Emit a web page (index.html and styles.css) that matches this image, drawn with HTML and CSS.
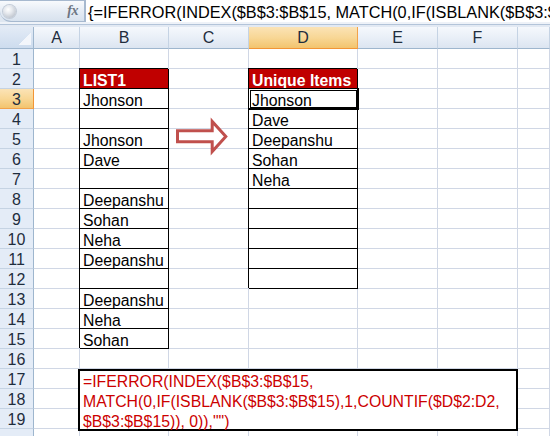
FILE: index.html
```html
<!DOCTYPE html>
<html>
<head>
<meta charset="utf-8">
<link rel="stylesheet" href="styles.css">
</head>
<body>
<div class="app">
  <div class="fbar">
    <div class="namebox"><span class="orb"></span><span class="fx">fx</span></div>
    <div class="finput">{=IFERROR(INDEX($B$3:$B$15, MATCH(0,IF(ISBLANK($B$3:$B$15),1,COUNTIF($D$2:D2, $B$3:$B$15)), 0)),"")}</div>
  </div>
  <div class="strip"></div>
  <div class="sheet">
    <div class="row hrow">
      <div class="c corner"></div><div class="c ch">A</div><div class="c ch">B</div><div class="c ch">C</div><div class="c ch chsel">D</div><div class="c ch">E</div><div class="c ch">F</div><div class="c ch"></div>
    </div>
    <div class="row"><div class="c rh">1</div><div class="c"></div><div class="c"></div><div class="c"></div><div class="c"></div><div class="c"></div><div class="c"></div><div class="c"></div></div>
    <div class="row"><div class="c rh">2</div><div class="c"></div><div class="c box hdr">LIST1</div><div class="c"></div><div class="c box hdr">Unique Items</div><div class="c"></div><div class="c"></div><div class="c"></div></div>
    <div class="row"><div class="c rh rhsel">3</div><div class="c"></div><div class="c box">Jhonson</div><div class="c"></div><div class="c box sel">Jhonson</div><div class="c"></div><div class="c"></div><div class="c"></div></div>
    <div class="row"><div class="c rh">4</div><div class="c"></div><div class="c box"></div><div class="c"></div><div class="c box">Dave</div><div class="c"></div><div class="c"></div><div class="c"></div></div>
    <div class="row"><div class="c rh">5</div><div class="c"></div><div class="c box">Jhonson</div><div class="c"></div><div class="c box">Deepanshu</div><div class="c"></div><div class="c"></div><div class="c"></div></div>
    <div class="row"><div class="c rh">6</div><div class="c"></div><div class="c box">Dave</div><div class="c"></div><div class="c box">Sohan</div><div class="c"></div><div class="c"></div><div class="c"></div></div>
    <div class="row"><div class="c rh">7</div><div class="c"></div><div class="c box"></div><div class="c"></div><div class="c box">Neha</div><div class="c"></div><div class="c"></div><div class="c"></div></div>
    <div class="row"><div class="c rh">8</div><div class="c"></div><div class="c box">Deepanshu</div><div class="c"></div><div class="c box"></div><div class="c"></div><div class="c"></div><div class="c"></div></div>
    <div class="row"><div class="c rh">9</div><div class="c"></div><div class="c box">Sohan</div><div class="c"></div><div class="c box"></div><div class="c"></div><div class="c"></div><div class="c"></div></div>
    <div class="row"><div class="c rh">10</div><div class="c"></div><div class="c box">Neha</div><div class="c"></div><div class="c box"></div><div class="c"></div><div class="c"></div><div class="c"></div></div>
    <div class="row"><div class="c rh">11</div><div class="c"></div><div class="c box">Deepanshu</div><div class="c"></div><div class="c box"></div><div class="c"></div><div class="c"></div><div class="c"></div></div>
    <div class="row"><div class="c rh">12</div><div class="c"></div><div class="c box"></div><div class="c"></div><div class="c box"></div><div class="c"></div><div class="c"></div><div class="c"></div></div>
    <div class="row"><div class="c rh">13</div><div class="c"></div><div class="c box">Deepanshu</div><div class="c"></div><div class="c"></div><div class="c"></div><div class="c"></div><div class="c"></div></div>
    <div class="row"><div class="c rh">14</div><div class="c"></div><div class="c box">Neha</div><div class="c"></div><div class="c"></div><div class="c"></div><div class="c"></div><div class="c"></div></div>
    <div class="row"><div class="c rh">15</div><div class="c"></div><div class="c box">Sohan</div><div class="c"></div><div class="c"></div><div class="c"></div><div class="c"></div><div class="c"></div></div>
    <div class="row"><div class="c rh">16</div><div class="c"></div><div class="c"></div><div class="c"></div><div class="c"></div><div class="c"></div><div class="c"></div><div class="c"></div></div>
    <div class="row"><div class="c rh">17</div><div class="c"></div><div class="c"></div><div class="c"></div><div class="c"></div><div class="c"></div><div class="c"></div><div class="c"></div></div>
    <div class="row"><div class="c rh">18</div><div class="c"></div><div class="c"></div><div class="c"></div><div class="c"></div><div class="c"></div><div class="c"></div><div class="c"></div></div>
    <div class="row"><div class="c rh">19</div><div class="c"></div><div class="c"></div><div class="c"></div><div class="c"></div><div class="c"></div><div class="c"></div><div class="c"></div></div>
    <div class="row"><div class="c rh"></div><div class="c"></div><div class="c"></div><div class="c"></div><div class="c"></div><div class="c"></div><div class="c"></div><div class="c"></div></div>
  </div>

  <svg class="arrow" width="62" height="46" viewBox="0 0 62 46">
    <path d="M7.5 16.8 H42.2 V7.5 L55.8 22.5 L42.2 37.5 V27.8 H7.5 Z" fill="#fff" stroke="#c0504d" stroke-width="3" stroke-linejoin="miter"/>
  </svg>

  <div class="fbox">
    <span class="fl">=IFERROR(INDEX($B$3:$B$15,</span>
    <span class="fl">MATCH(0,IF(ISBLANK($B$3:$B$15),1,COUNTIF($D$2:D2,</span>
    <span class="fl">$B$3:$B$15)), 0)),"")</span>
  </div>
</div>
</body>
</html>
```

FILE: styles.css
```css
html, body {
  margin: 0;
  padding: 0;
  background: #fff;
  overflow: hidden;
}
.app {
  position: relative;
  width: 550px;
  height: 436px;
  overflow: hidden;
  font-family: "Liberation Sans", Arial, sans-serif;
  color: #000;
}
.fbar {
  display: flex;
  height: 22px;
  background: #dfe7f1;
}
.namebox {
  box-sizing: border-box;
  width: 85px;
  height: 22px;
  border: 1px solid #a7b9cf;
  border-left: none;
  border-radius: 0 0 0 11px;
  background: linear-gradient(#f8fafd, #e4ebf4 55%, #d8e2ee);
  display: flex;
  align-items: center;
  justify-content: space-between;
  padding: 0 6px 0 3px;
}
.orb {
  width: 13px;
  height: 13px;
  border-radius: 50%;
  background: radial-gradient(circle at 40% 35%, #ffffff 0, #e6e9ee 35%, #a9b1bc 100%);
  box-shadow: 0 0 0 1px #c3ccd8;
}
.fx {
  font-family: "Liberation Serif", "Times New Roman", serif;
  font-style: italic;
  font-weight: bold;
  font-size: 14px;
  color: #6e7683;
  letter-spacing: -0.5px;
}
.finput {
  flex: 1;
  background: #fff;
  border-left: 1px solid #a7b9cf;
  font-size: 16.3px;
  line-height: 20px;
  padding: 2px 0 0 2px;
  white-space: nowrap;
  overflow: hidden;
}
.strip {
  height: 5px;
  background: linear-gradient(#eef2f8 0 2px, #b3c4d9 2px 3px, #e2e9f3 3px);
}
.sheet {
  display: flex;
  flex-direction: column;
}
.row {
  display: grid;
  grid-template-columns: 34px 46px 89px 80px 109px 80px 80px 1fr;
  height: 20px;
}
.hrow {
  height: 22px;
}
.c {
  box-sizing: border-box;
  border-right: 1px solid #d0d7e5;
  border-bottom: 1px solid #d0d7e5;
  font-size: 15.8px;
  line-height: 15px;
  padding: 4px 0 0 3px;
  white-space: nowrap;
  overflow: visible;
}
.ch {
  background: linear-gradient(#f5f8fc, #e9eff7 50%, #dce5f1);
  border-right: 1px solid #c5d3e4;
  border-bottom: 1px solid #9eb6ce;
  font-size: 16px;
  line-height: 21px;
  padding: 0;
  text-align: center;
  color: #1f2d3d;
}
.chsel {
  background: linear-gradient(#fbe3b6, #f8d796 50%, #f3c46e);
  border-right: 1px solid #f2a24a;
  border-bottom: 1px solid #f29536;
}
.corner {
  background:
    linear-gradient(135deg, transparent 50%, #f3f6fb 50%) right 2px bottom 3px / 14px 12px no-repeat,
    linear-gradient(#e3ebf6, #cddcee);
  border-right: 1px solid #9eb6ce;
  border-bottom: 1px solid #9eb6ce;
  padding: 0;
}
.rh {
  background: #e4ecf7;
  border-right: 1px solid #9eb6ce;
  border-bottom: 1px solid #c5d3e3;
  font-size: 16px;
  line-height: 16px;
  padding: 3px 0 0 0;
  text-align: center;
  color: #1f2d3d;
}
.rhsel {
  background: linear-gradient(#fbe3b6, #f8d796 50%, #f3c46e);
  border-right: 1px solid #f29536;
  border-bottom: 1px solid #f2a24a;
}
.box {
  position: relative;
  border-right-color: #000;
  border-bottom-color: #000;
  box-shadow: -1px -1px 0 #000;
}
.hdr {
  background: #c00000;
  color: #fff;
  font-weight: bold;
}
.sel {
  box-shadow: 0 0 0 1px #000, inset 1px 1px 0 #fff, inset 2px 2px 0 #000, inset -1px -1px 0 #000;
}
.arrow {
  position: absolute;
  left: 170px;
  top: 114px;
}
.fbox {
  position: absolute;
  left: 78px;
  top: 369px;
  width: 440px;
  height: 62px;
  box-sizing: border-box;
  border: 2px solid #000;
  background: #fff;
  padding: 1px 0 0 3px;
  color: #cc0000;
  font-size: 15.8px;
  line-height: 20px;
}
.fl {
  display: block;
  white-space: nowrap;
}
```
